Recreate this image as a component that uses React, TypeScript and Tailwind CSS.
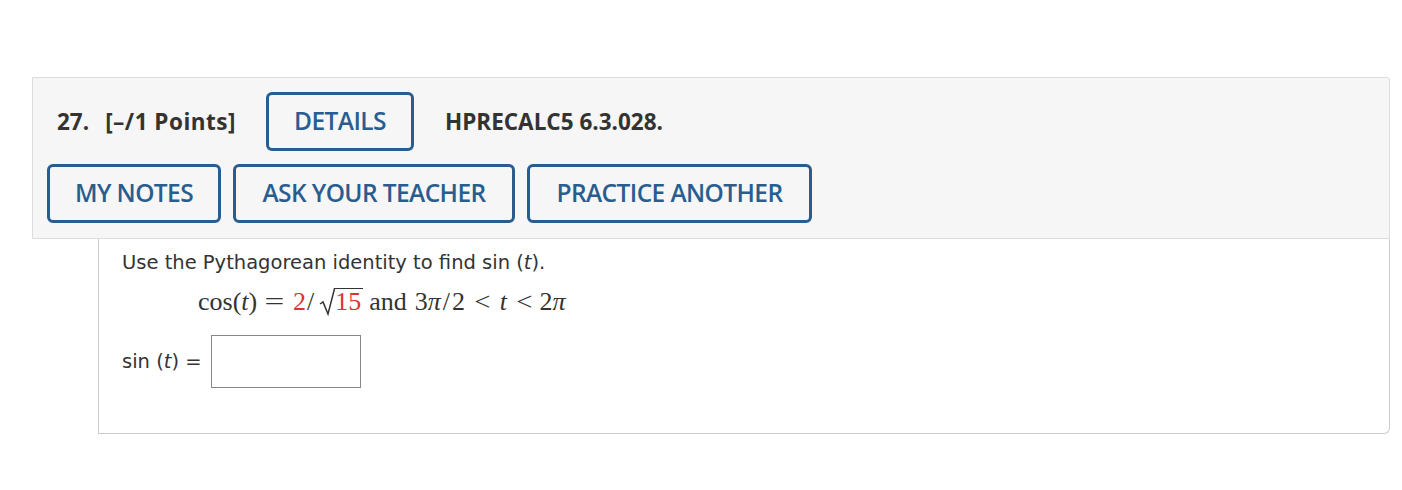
import React from 'react';

const btn =
  "h-[59px] rounded-[6px] border-[3px] border-[#2a5d8f] bg-[#f6f6f6] text-[#2a5d8f] text-[24.5px] font-semibold tracking-[-0.6px] flex items-center justify-center";

export default function App() {
  return (
    <div className="w-[1402px] h-[490px] bg-white pt-[77px] pl-[32px] font-['Open_Sans',sans-serif]">
      <div className="w-[1358px] h-[162px] bg-[#f6f6f6] border border-[#dddddd] rounded-tr-[3px]">
        <div className="flex items-center h-[59px] mt-[14px]">
          <span className="ml-[24px] text-[22.5px] font-bold text-[#333]">27.</span>
          <span className="ml-[16px] text-[22.5px] font-bold text-[#333] tracking-[0.5px]">[–/1 Points]</span>
          <div className={btn + " ml-[30px] w-[148px]"}>DETAILS</div>
          <span className="ml-[31px] text-[22.5px] font-bold text-[#333]">HPRECALC5 6.3.028.</span>
        </div>
        <div className="flex items-center gap-[12px] ml-[14px] mt-[13px]">
          <div className={btn + " w-[174px]"}>MY NOTES</div>
          <div className={btn + " w-[282px]"}>ASK YOUR TEACHER</div>
          <div className={btn + " w-[285px]"}>PRACTICE ANOTHER</div>
        </div>
      </div>
      <div className="ml-[66px] w-[1292px] h-[195px] border border-t-0 border-[#cccccc] rounded-br-[6px] pl-[23px] pt-[10px] font-['DejaVu_Sans',Verdana,sans-serif]">
        <p className="text-[19.5px] text-[#333] leading-[28px]">
          Use the Pythagorean identity to find sin (<i>t</i>).
        </p>
        <div className="ml-[76px] mt-[4px] h-[40px] flex items-center text-[26px] text-[#333] font-['Liberation_Serif',serif] whitespace-pre">
          <span>cos(<i>t</i>)</span>
          <span className="ml-[10px] inline-block scale-x-[1.35]">=</span>
          <span className="ml-[11px] text-[#d33]">2</span>
          <span className="ml-[1px]">/</span>
          <span className="ml-[5px] inline-flex items-start h-[28px] mt-[2px]">
            <svg width="16" height="28" viewBox="0 0 16 28" className="shrink-0">
              <path d="M1 16 L4 14 L9 26 L15.5 0.8 L16 0.8" fill="none" stroke="#333" strokeWidth="1.5" strokeLinejoin="miter" />
            </svg>
            <span className="border-t-[1.5px] border-[#333] text-[#d33] leading-[26px] pr-[2px]">15</span>
          </span>
          <span className="ml-[6px]">and</span>
          <span className="ml-[8px]">3<i>π</i><span className="mx-[2px]">/</span>2</span>
          <span className="ml-[10px] inline-block scale-x-[1.1]">&lt;</span>
          <i className="ml-[10px]">t</i>
          <span className="ml-[10px] inline-block scale-x-[1.1]">&lt;</span>
          <span className="ml-[8px]">2<i>π</i></span>
        </div>
        <div className="flex items-center mt-[14px]">
          <span className="text-[19.5px] text-[#333]">sin (<i>t</i>) =</span>
          <div className="ml-[9px] w-[150px] h-[53px] border border-[#888] bg-white" />
        </div>
      </div>
    </div>
  );
}
